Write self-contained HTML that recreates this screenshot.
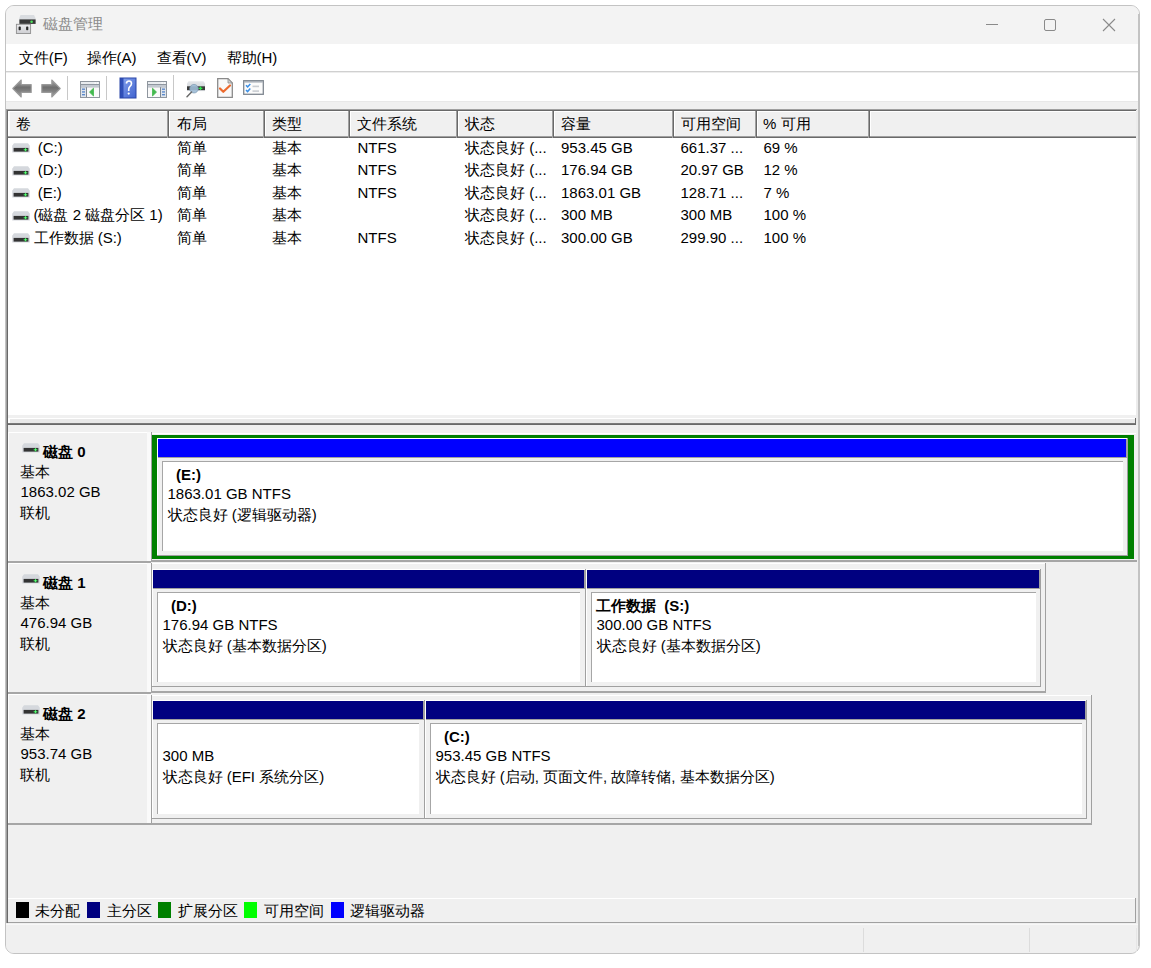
<!DOCTYPE html>
<html><head><meta charset="utf-8">
<style>
*{box-sizing:border-box;margin:0;padding:0}
html,body{width:1151px;height:968px;overflow:hidden;background:#fff;font-family:"Liberation Sans",sans-serif;font-size:15px;color:#000}
.a{position:absolute}
.t{position:absolute;white-space:nowrap;line-height:20px}
.b{font-weight:bold}
svg{position:absolute;overflow:visible}
</style></head><body>
<div class="a" style="left:5px;top:5px;width:1135px;height:949px;border:1px solid #c3c3c3;border-radius:9px;background:#f0f0f0;overflow:hidden">
<div class="a" style="left:0;top:0;width:1133px;height:38px;background:#f3f3f3"></div>
</div>
<div class="a" style="left:1138px;top:14px;width:1px;height:932px;background:#c3c3c3;"></div>
<svg style="left:15px;top:14px" width="22" height="21" viewBox="0 0 22 21">
<defs><linearGradient id="dbox" x1="0" y1="0" x2="0" y2="1"><stop offset="0" stop-color="#ececee"/><stop offset="1" stop-color="#cdced2"/></linearGradient></defs>
<path d="M5.5 1 H19 L20.6 4.5 V10 H4.2 V4.5 Z" fill="#d9dce0"/>
<rect x="4.4" y="5.4" width="16.2" height="4.5" fill="#383838"/>
<circle cx="16.6" cy="7.8" r="1.3" fill="#4ee35f"/>
<rect x="1.4" y="10.3" width="14.2" height="9.2" fill="url(#dbox)" stroke="#8f8f8f" stroke-width="0.9"/>
<rect x="3.6" y="12.6" width="2.2" height="3.6" rx="0.8" fill="#2a2a2a"/>
<rect x="11.1" y="12.6" width="2.2" height="3.6" rx="0.8" fill="#2a2a2a"/>
</svg>
<div class="t" style="left:43px;top:14px;color:#8b8b8b">磁盘管理</div>
<div class="a" style="left:986px;top:24px;width:12px;height:1px;background:#8a8a8a;"></div>
<div class="a" style="left:1044px;top:19px;width:12px;height:12px;background:transparent;border:1px solid #8a8a8a;border-radius:2px"></div>
<svg style="left:1102px;top:18px" width="14" height="14" viewBox="0 0 14 14"><path d="M1 1 L13 13 M13 1 L1 13" stroke="#8a8a8a" stroke-width="1.1"/></svg>
<div class="a" style="left:6px;top:44px;width:1132px;height:27px;background:#fff;"></div>
<div class="a" style="left:6px;top:71px;width:1132px;height:1px;background:#d0d0d0;"></div>
<div class="t" style="left:18.7px;top:48px;">文件(F)</div>
<div class="t" style="left:86.5px;top:48px;">操作(A)</div>
<div class="t" style="left:156.5px;top:48px;">查看(V)</div>
<div class="t" style="left:226.5px;top:48px;">帮助(H)</div>
<div class="a" style="left:6px;top:72px;width:1132px;height:29px;background:#fff;"></div>
<div class="a" style="left:6px;top:72px;width:1132px;height:1px;background:#ededed;"></div>
<div class="a" style="left:6px;top:101px;width:1132px;height:1px;background:#e8e8e8;"></div>
<div class="a" style="left:6px;top:102px;width:1132px;height:7px;background:#f0f0f0;"></div>
<div class="a" style="left:67px;top:76px;width:1px;height:24px;background:#c8c8c8;"></div>
<div class="a" style="left:106px;top:76px;width:1px;height:24px;background:#c8c8c8;"></div>
<div class="a" style="left:173px;top:75px;width:1px;height:25px;background:#c8c8c8;"></div>
<svg style="left:12px;top:79px" width="20" height="19" viewBox="0 0 20 19">
<defs><linearGradient id="ar" x1="0" y1="0" x2="0" y2="1"><stop offset="0" stop-color="#a9a9a9"/><stop offset="0.45" stop-color="#6f6f6f"/><stop offset="1" stop-color="#a0a0a0"/></linearGradient></defs>
<path d="M0.8 9.5 L9.2 1 V5.6 H19.2 V13.4 H9.2 V18 Z" fill="url(#ar)" stroke="#9a9a9a" stroke-width="1.1" stroke-linejoin="round"/></svg>
<svg style="left:41px;top:79px" width="20" height="19" viewBox="0 0 20 19">
<path d="M19.2 9.5 L10.8 1 V5.6 H0.8 V13.4 H10.8 V18 Z" fill="url(#ar)" stroke="#9a9a9a" stroke-width="1.1" stroke-linejoin="round"/></svg>
<svg style="left:80px;top:81px" width="20" height="17" viewBox="0 0 20 17"><rect x="0" y="0" width="20" height="17" fill="#8f969e"/><rect x="1" y="1" width="18" height="2" fill="#e9ecef"/><rect x="1" y="3" width="18" height="0.8" fill="#7f8790"/><rect x="14.5" y="1.4" width="1.4" height="1.3" fill="#fff"/><rect x="17" y="1.4" width="1.4" height="1.3" fill="#fff"/><rect x="1" y="3.8" width="18" height="2.6" fill="#c3c9d1"/><rect x="1" y="6.4" width="5" height="9.6" fill="#dfe5ec"/><rect x="6" y="6.4" width="1" height="9.6" fill="#7f8790"/><rect x="7" y="6.4" width="12" height="9.6" fill="#fafafa"/><rect x="2" y="7.6" width="3" height="1.1" fill="#3b73c4"/><rect x="2" y="10.4" width="3" height="1.1" fill="#3b73c4"/><rect x="2" y="13.2" width="3" height="1.1" fill="#3b73c4"/><path d="M13.5 7.2 V15 L9.5 11.1 Z" fill="#42b94e" stroke="#42b94e" stroke-width="0.8" stroke-linejoin="round"/></svg>
<svg style="left:147px;top:81px" width="20" height="17" viewBox="0 0 20 17"><rect x="0" y="0" width="20" height="17" fill="#8f969e"/><rect x="1" y="1" width="18" height="2" fill="#e9ecef"/><rect x="1" y="3" width="18" height="0.8" fill="#7f8790"/><rect x="14.5" y="1.4" width="1.4" height="1.3" fill="#fff"/><rect x="17" y="1.4" width="1.4" height="1.3" fill="#fff"/><rect x="1" y="3.8" width="18" height="2.6" fill="#c3c9d1"/><rect x="14" y="6.4" width="5" height="9.6" fill="#dfe5ec"/><rect x="13" y="6.4" width="1" height="9.6" fill="#7f8790"/><rect x="1" y="6.4" width="12" height="9.6" fill="#fafafa"/><rect x="15" y="7.6" width="3" height="1.1" fill="#3b73c4"/><rect x="15" y="10.4" width="3" height="1.1" fill="#3b73c4"/><rect x="15" y="13.2" width="3" height="1.1" fill="#3b73c4"/><path d="M5.5 7.2 V15 L9.5 11.1 Z" fill="#42b94e" stroke="#42b94e" stroke-width="0.8" stroke-linejoin="round"/></svg>
<svg style="left:120px;top:78px" width="16" height="20" viewBox="0 0 16 20">
<defs><linearGradient id="hq" x1="0" y1="0" x2="1" y2="1"><stop offset="0" stop-color="#89a6ee"/><stop offset="1" stop-color="#3f62cf"/></linearGradient></defs>
<rect x="0" y="0" width="16" height="20" fill="url(#hq)"/>
<rect x="0" y="0" width="3.5" height="20" fill="#2f4fb8"/>
<rect x="0" y="0" width="16" height="20" fill="none" stroke="#2a46a8" stroke-width="1"/>
<path d="M6.3 5.5 Q6.8 3 9 3 Q11.5 3 11.5 5.6 Q11.5 7.3 9.8 8.6 Q8.7 9.6 8.7 11.5 V13" fill="none" stroke="#fff" stroke-width="1.6"/>
<circle cx="8.7" cy="15.6" r="1.1" fill="#fff"/></svg>
<svg style="left:186px;top:80px" width="21" height="18" viewBox="0 0 21 18">
<defs><linearGradient id="mg" x1="0" y1="0" x2="0" y2="1"><stop offset="0" stop-color="#e6e8eb"/><stop offset="1" stop-color="#c9cdd3"/></linearGradient></defs>
<path d="M2.5 1.2 H17.5 L19 3.5 V11 H1 V3.5 Z" fill="url(#mg)"/>
<rect x="1" y="6.3" width="18" height="4" fill="#3a3a3a"/>
<rect x="1" y="10.3" width="18" height="0.8" fill="#d9dce0"/>
<path d="M12.6 8.3 H16.4 M14.5 6.5 V10.1" stroke="#2ee24a" stroke-width="1.3"/>
<circle cx="8" cy="8.7" r="4.3" fill="#9fbcd6" fill-opacity="0.9" stroke="#7d9ab3" stroke-width="0.7"/>
<path d="M5.6 12 L1 16.8" stroke="#6b6b6b" stroke-width="1.5" stroke-linecap="round"/></svg>
<svg style="left:217px;top:78px" width="16" height="20" viewBox="0 0 16 20">
<path d="M0.7 0.7 H11 L15.3 5 V19.3 H0.7 Z" fill="#f9f9f9" stroke="#8a8a8a" stroke-width="1.3"/>
<path d="M11 0.7 V5 H15.3 Z" fill="#cfcfcf" stroke="#8a8a8a" stroke-width="0.8"/>
<path d="M3 10.5 L6.3 13.8 L13 7.5" fill="none" stroke="#ec6a2e" stroke-width="2.2" stroke-linecap="round" stroke-linejoin="round"/></svg>
<svg style="left:243px;top:80px" width="21" height="15" viewBox="0 0 21 15">
<rect x="0.7" y="0.7" width="19.6" height="13.6" fill="#fbfbfb" stroke="#7f8790" stroke-width="1.3"/>
<rect x="1.3" y="1.3" width="18.4" height="1.2" fill="#9aa2ab"/>
<path d="M3 5.3 L4.6 6.9 L7.3 3.9 M3 10 L4.6 11.6 L7.3 8.6" fill="none" stroke="#3a8fe6" stroke-width="1.5"/>
<rect x="9.5" y="5.6" width="6.5" height="1.6" fill="#c9cdd2"/><rect x="9.5" y="10.3" width="6.5" height="1.6" fill="#c9cdd2"/></svg>
<div class="a" style="left:6px;top:109px;width:1131px;height:1px;background:#a0a0a0;"></div>
<div class="a" style="left:6px;top:110px;width:1130px;height:1px;background:#696969;"></div>
<div class="a" style="left:1136px;top:110px;width:2px;height:814px;background:#ececec;"></div>
<div class="a" style="left:6px;top:109px;width:1px;height:316px;background:#a0a0a0;"></div>
<div class="a" style="left:7px;top:110px;width:1px;height:315px;background:#696969;"></div>
<div class="a" style="left:8px;top:111px;width:1128px;height:304px;background:#fff;"></div>
<div class="a" style="left:8px;top:111px;width:1128px;height:27px;background:#f0f0f0;"></div>
<div class="a" style="left:8px;top:136px;width:1128px;height:1px;background:#a0a0a0;"></div>
<div class="a" style="left:8px;top:137px;width:1128px;height:1px;background:#696969;"></div>
<div class="a" style="left:8px;top:111px;width:1px;height:25px;background:#fff;"></div>
<div class="a" style="left:169px;top:111px;width:1px;height:25px;background:#fff;"></div>
<div class="a" style="left:265px;top:111px;width:1px;height:25px;background:#fff;"></div>
<div class="a" style="left:350px;top:111px;width:1px;height:25px;background:#fff;"></div>
<div class="a" style="left:458px;top:111px;width:1px;height:25px;background:#fff;"></div>
<div class="a" style="left:554px;top:111px;width:1px;height:25px;background:#fff;"></div>
<div class="a" style="left:674px;top:111px;width:1px;height:25px;background:#fff;"></div>
<div class="a" style="left:757px;top:111px;width:1px;height:25px;background:#fff;"></div>
<div class="a" style="left:870px;top:111px;width:1px;height:25px;background:#fff;"></div>
<div class="a" style="left:8px;top:111px;width:1128px;height:1px;background:#fff;"></div>
<div class="a" style="left:9px;top:112px;width:1px;height:24px;background:#fafafa;"></div>
<div class="a" style="left:167px;top:111px;width:1px;height:27px;background:#a0a0a0;"></div>
<div class="a" style="left:168px;top:111px;width:1px;height:27px;background:#696969;"></div>
<div class="a" style="left:263px;top:111px;width:1px;height:27px;background:#a0a0a0;"></div>
<div class="a" style="left:264px;top:111px;width:1px;height:27px;background:#696969;"></div>
<div class="a" style="left:348px;top:111px;width:1px;height:27px;background:#a0a0a0;"></div>
<div class="a" style="left:349px;top:111px;width:1px;height:27px;background:#696969;"></div>
<div class="a" style="left:456px;top:111px;width:1px;height:27px;background:#a0a0a0;"></div>
<div class="a" style="left:457px;top:111px;width:1px;height:27px;background:#696969;"></div>
<div class="a" style="left:552px;top:111px;width:1px;height:27px;background:#a0a0a0;"></div>
<div class="a" style="left:553px;top:111px;width:1px;height:27px;background:#696969;"></div>
<div class="a" style="left:672px;top:111px;width:1px;height:27px;background:#a0a0a0;"></div>
<div class="a" style="left:673px;top:111px;width:1px;height:27px;background:#696969;"></div>
<div class="a" style="left:755px;top:111px;width:1px;height:27px;background:#a0a0a0;"></div>
<div class="a" style="left:756px;top:111px;width:1px;height:27px;background:#696969;"></div>
<div class="a" style="left:868px;top:111px;width:1px;height:27px;background:#a0a0a0;"></div>
<div class="a" style="left:869px;top:111px;width:1px;height:27px;background:#696969;"></div>
<div class="t" style="left:15.5px;top:114px;">卷</div>
<div class="t" style="left:177px;top:114px;">布局</div>
<div class="t" style="left:271.5px;top:114px;">类型</div>
<div class="t" style="left:357px;top:114px;">文件系统</div>
<div class="t" style="left:465px;top:114px;">状态</div>
<div class="t" style="left:561px;top:114px;">容量</div>
<div class="t" style="left:681px;top:114px;">可用空间</div>
<div class="t" style="left:763px;top:114px;">% 可用</div>
<svg style="left:12px;top:143.2px" width="18" height="10" viewBox="0 0 18 10">
<path d="M2 0.2 H16 L17.8 2.8 V9.6 H0.2 V2.8 Z" fill="#d5d8dd"/>
<rect x="1.6" y="4.9" width="14.8" height="3.7" fill="#333"/>
<path d="M11.6 6.75 H15.4 M13.5 5.0 V8.5" stroke="#3be257" stroke-width="1.1"/>
<circle cx="13.5" cy="6.75" r="0.9" fill="#5dff78"/></svg>
<div class="t" style="left:33.5px;top:137.6px;">&nbsp;(C:)</div>
<div class="t" style="left:177px;top:137.6px;">简单</div>
<div class="t" style="left:272px;top:137.6px;">基本</div>
<div class="t" style="left:357.5px;top:137.6px;">NTFS</div>
<div class="t" style="left:465px;top:137.6px;">状态良好 (...</div>
<div class="t" style="left:561px;top:137.6px;">953.45 GB</div>
<div class="t" style="left:680.5px;top:137.6px;">661.37 ...</div>
<div class="t" style="left:763.5px;top:137.6px;">69 %</div>
<svg style="left:12px;top:165.7px" width="18" height="10" viewBox="0 0 18 10">
<path d="M2 0.2 H16 L17.8 2.8 V9.6 H0.2 V2.8 Z" fill="#d5d8dd"/>
<rect x="1.6" y="4.9" width="14.8" height="3.7" fill="#333"/>
<path d="M11.6 6.75 H15.4 M13.5 5.0 V8.5" stroke="#3be257" stroke-width="1.1"/>
<circle cx="13.5" cy="6.75" r="0.9" fill="#5dff78"/></svg>
<div class="t" style="left:33.5px;top:160.1px;">&nbsp;(D:)</div>
<div class="t" style="left:177px;top:160.1px;">简单</div>
<div class="t" style="left:272px;top:160.1px;">基本</div>
<div class="t" style="left:357.5px;top:160.1px;">NTFS</div>
<div class="t" style="left:465px;top:160.1px;">状态良好 (...</div>
<div class="t" style="left:561px;top:160.1px;">176.94 GB</div>
<div class="t" style="left:680.5px;top:160.1px;">20.97 GB</div>
<div class="t" style="left:763.5px;top:160.1px;">12 %</div>
<svg style="left:12px;top:188.2px" width="18" height="10" viewBox="0 0 18 10">
<path d="M2 0.2 H16 L17.8 2.8 V9.6 H0.2 V2.8 Z" fill="#d5d8dd"/>
<rect x="1.6" y="4.9" width="14.8" height="3.7" fill="#333"/>
<path d="M11.6 6.75 H15.4 M13.5 5.0 V8.5" stroke="#3be257" stroke-width="1.1"/>
<circle cx="13.5" cy="6.75" r="0.9" fill="#5dff78"/></svg>
<div class="t" style="left:33.5px;top:182.6px;">&nbsp;(E:)</div>
<div class="t" style="left:177px;top:182.6px;">简单</div>
<div class="t" style="left:272px;top:182.6px;">基本</div>
<div class="t" style="left:357.5px;top:182.6px;">NTFS</div>
<div class="t" style="left:465px;top:182.6px;">状态良好 (...</div>
<div class="t" style="left:561px;top:182.6px;">1863.01 GB</div>
<div class="t" style="left:680.5px;top:182.6px;">128.71 ...</div>
<div class="t" style="left:763.5px;top:182.6px;">7 %</div>
<svg style="left:12px;top:210.7px" width="18" height="10" viewBox="0 0 18 10">
<path d="M2 0.2 H16 L17.8 2.8 V9.6 H0.2 V2.8 Z" fill="#d5d8dd"/>
<rect x="1.6" y="4.9" width="14.8" height="3.7" fill="#333"/>
<path d="M11.6 6.75 H15.4 M13.5 5.0 V8.5" stroke="#3be257" stroke-width="1.1"/>
<circle cx="13.5" cy="6.75" r="0.9" fill="#5dff78"/></svg>
<div class="t" style="left:33.5px;top:205.1px;">(磁盘 2 磁盘分区 1)</div>
<div class="t" style="left:177px;top:205.1px;">简单</div>
<div class="t" style="left:272px;top:205.1px;">基本</div>
<div class="t" style="left:357.5px;top:205.1px;"></div>
<div class="t" style="left:465px;top:205.1px;">状态良好 (...</div>
<div class="t" style="left:561px;top:205.1px;">300 MB</div>
<div class="t" style="left:680.5px;top:205.1px;">300 MB</div>
<div class="t" style="left:763.5px;top:205.1px;">100 %</div>
<svg style="left:12px;top:233.2px" width="18" height="10" viewBox="0 0 18 10">
<path d="M2 0.2 H16 L17.8 2.8 V9.6 H0.2 V2.8 Z" fill="#d5d8dd"/>
<rect x="1.6" y="4.9" width="14.8" height="3.7" fill="#333"/>
<path d="M11.6 6.75 H15.4 M13.5 5.0 V8.5" stroke="#3be257" stroke-width="1.1"/>
<circle cx="13.5" cy="6.75" r="0.9" fill="#5dff78"/></svg>
<div class="t" style="left:33.5px;top:227.6px;">工作数据 (S:)</div>
<div class="t" style="left:177px;top:227.6px;">简单</div>
<div class="t" style="left:272px;top:227.6px;">基本</div>
<div class="t" style="left:357.5px;top:227.6px;">NTFS</div>
<div class="t" style="left:465px;top:227.6px;">状态良好 (...</div>
<div class="t" style="left:561px;top:227.6px;">300.00 GB</div>
<div class="t" style="left:680.5px;top:227.6px;">299.90 ...</div>
<div class="t" style="left:763.5px;top:227.6px;">100 %</div>
<div class="a" style="left:8px;top:415px;width:1128px;height:3px;background:#f0f0f0;"></div>
<div class="a" style="left:8px;top:418px;width:1127px;height:1px;background:#fff;"></div>
<div class="a" style="left:8px;top:419px;width:1127px;height:4px;background:#e9e9e9;"></div>
<div class="a" style="left:8px;top:418px;width:2px;height:5px;background:#fff;"></div>
<div class="a" style="left:8px;top:423px;width:1128px;height:1px;background:#7a7a7a;"></div>
<div class="a" style="left:8px;top:424px;width:1128px;height:1px;background:#696969;"></div>
<div class="a" style="left:1135px;top:418px;width:1px;height:7px;background:#696969;"></div>
<div class="a" style="left:6px;top:425px;width:1px;height:498px;background:#a0a0a0;"></div>
<div class="a" style="left:7px;top:425px;width:1px;height:498px;background:#696969;"></div>
<div class="a" style="left:8px;top:425px;width:1130px;height:473px;background:#f0f0f0;"></div>
<div class="a" style="left:8px;top:432px;width:143px;height:1px;background:#fff;"></div>
<div class="a" style="left:8px;top:432px;width:1px;height:129px;background:#fff;"></div>
<div class="a" style="left:147px;top:432px;width:4px;height:129px;background:#fafafa;"></div>
<div class="a" style="left:8px;top:561px;width:143px;height:2px;background:#a6a6a6;"></div>
<svg style="left:22px;top:443px" width="18" height="10" viewBox="0 0 18 10">
<path d="M2 0.2 H16 L17.8 2.8 V9.6 H0.2 V2.8 Z" fill="#d5d8dd"/>
<rect x="1.6" y="4.9" width="14.8" height="3.7" fill="#333"/>
<path d="M11.6 6.75 H15.4 M13.5 5.0 V8.5" stroke="#3be257" stroke-width="1.1"/>
<circle cx="13.5" cy="6.75" r="0.9" fill="#5dff78"/></svg>
<div class="t" style="left:43px;top:442px;font-weight:bold">磁盘 0</div>
<div class="t" style="left:19.7px;top:462px;">基本</div>
<div class="t" style="left:20.5px;top:482px;">1863.02 GB</div>
<div class="t" style="left:19.7px;top:503px;">联机</div>
<div class="a" style="left:8px;top:563px;width:143px;height:1px;background:#fff;"></div>
<div class="a" style="left:8px;top:563px;width:1px;height:129px;background:#fff;"></div>
<div class="a" style="left:147px;top:563px;width:4px;height:129px;background:#fafafa;"></div>
<div class="a" style="left:8px;top:692px;width:143px;height:2px;background:#a6a6a6;"></div>
<svg style="left:22px;top:574px" width="18" height="10" viewBox="0 0 18 10">
<path d="M2 0.2 H16 L17.8 2.8 V9.6 H0.2 V2.8 Z" fill="#d5d8dd"/>
<rect x="1.6" y="4.9" width="14.8" height="3.7" fill="#333"/>
<path d="M11.6 6.75 H15.4 M13.5 5.0 V8.5" stroke="#3be257" stroke-width="1.1"/>
<circle cx="13.5" cy="6.75" r="0.9" fill="#5dff78"/></svg>
<div class="t" style="left:43px;top:573px;font-weight:bold">磁盘 1</div>
<div class="t" style="left:19.7px;top:593px;">基本</div>
<div class="t" style="left:20.5px;top:613px;">476.94 GB</div>
<div class="t" style="left:19.7px;top:634px;">联机</div>
<div class="a" style="left:8px;top:694px;width:143px;height:1px;background:#fff;"></div>
<div class="a" style="left:8px;top:694px;width:1px;height:129px;background:#fff;"></div>
<div class="a" style="left:147px;top:694px;width:4px;height:129px;background:#fafafa;"></div>
<div class="a" style="left:8px;top:823px;width:143px;height:2px;background:#a6a6a6;"></div>
<svg style="left:22px;top:705px" width="18" height="10" viewBox="0 0 18 10">
<path d="M2 0.2 H16 L17.8 2.8 V9.6 H0.2 V2.8 Z" fill="#d5d8dd"/>
<rect x="1.6" y="4.9" width="14.8" height="3.7" fill="#333"/>
<path d="M11.6 6.75 H15.4 M13.5 5.0 V8.5" stroke="#3be257" stroke-width="1.1"/>
<circle cx="13.5" cy="6.75" r="0.9" fill="#5dff78"/></svg>
<div class="t" style="left:43px;top:704px;font-weight:bold">磁盘 2</div>
<div class="t" style="left:19.7px;top:724px;">基本</div>
<div class="t" style="left:20.5px;top:744px;">953.74 GB</div>
<div class="t" style="left:19.7px;top:765px;">联机</div>
<div class="a" style="left:151px;top:433px;width:985px;height:1px;background:#fff;"></div>
<div class="a" style="left:151px;top:432px;width:1px;height:129px;background:#a0a0a0;"></div>
<div class="a" style="left:151px;top:560px;width:986px;height:2px;background:#a6a6a6;"></div>
<div class="a" style="left:152px;top:435px;width:982px;height:124px;background:#008000;"></div>
<div class="a" style="left:157px;top:438px;width:971px;height:118px;background:#f0f0f0;"></div>
<div class="a" style="left:157px;top:438px;width:970px;height:1px;background:#fff;"></div>
<div class="a" style="left:157px;top:438px;width:1px;height:117px;background:#fff;"></div>
<div class="a" style="left:158px;top:439px;width:968px;height:18px;background:#0000ff;"></div>
<div class="a" style="left:158px;top:457px;width:969px;height:1px;background:#a0a0a0;"></div>
<div class="a" style="left:1126px;top:439px;width:1px;height:19px;background:#a0a0a0;"></div>
<div class="a" style="left:1127px;top:438px;width:1px;height:118px;background:#a0a0a0;"></div>
<div class="a" style="left:157px;top:555px;width:971px;height:1px;background:#a0a0a0;"></div>
<div class="a" style="left:162px;top:461px;width:961px;height:1px;background:#a6a6a6;"></div>
<div class="a" style="left:162px;top:461px;width:1px;height:90px;background:#a6a6a6;"></div>
<div class="a" style="left:163px;top:462px;width:960px;height:89px;background:#fff;"></div>
<div class="t" style="left:176px;top:465.2px;font-weight:bold">(E:)</div>
<div class="t" style="left:167.5px;top:483.7px;">1863.01 GB NTFS</div>
<div class="t" style="left:167.5px;top:504.7px;">状态良好 (逻辑驱动器)</div>
<div class="a" style="left:151px;top:563px;width:894px;height:1px;background:#fff;"></div>
<div class="a" style="left:151px;top:563px;width:1px;height:128px;background:#a0a0a0;"></div>
<div class="a" style="left:1045px;top:563px;width:1px;height:129px;background:#a0a0a0;"></div>
<div class="a" style="left:151px;top:691px;width:895px;height:2px;background:#a6a6a6;"></div>
<div class="a" style="left:152px;top:569px;width:433px;height:1px;background:#fff;"></div>
<div class="a" style="left:152px;top:569px;width:1px;height:117px;background:#fff;"></div>
<div class="a" style="left:153px;top:570px;width:431px;height:18px;background:#000080;"></div>
<div class="a" style="left:153px;top:588px;width:432px;height:1px;background:#a0a0a0;"></div>
<div class="a" style="left:584px;top:570px;width:1px;height:19px;background:#a0a0a0;"></div>
<div class="a" style="left:585px;top:569px;width:1px;height:118px;background:#a0a0a0;"></div>
<div class="a" style="left:152px;top:686px;width:434px;height:1px;background:#a0a0a0;"></div>
<div class="a" style="left:157px;top:592px;width:423px;height:1px;background:#a6a6a6;"></div>
<div class="a" style="left:157px;top:592px;width:1px;height:90px;background:#a6a6a6;"></div>
<div class="a" style="left:158px;top:593px;width:422px;height:89px;background:#fff;"></div>
<div class="t" style="left:171px;top:596.2px;font-weight:bold">(D:)</div>
<div class="t" style="left:162.5px;top:614.7px;">176.94 GB NTFS</div>
<div class="t" style="left:162.5px;top:635.7px;">状态良好 (基本数据分区)</div>
<div class="a" style="left:586px;top:569px;width:454px;height:1px;background:#fff;"></div>
<div class="a" style="left:586px;top:569px;width:1px;height:117px;background:#fff;"></div>
<div class="a" style="left:587px;top:570px;width:452px;height:18px;background:#000080;"></div>
<div class="a" style="left:587px;top:588px;width:453px;height:1px;background:#a0a0a0;"></div>
<div class="a" style="left:1039px;top:570px;width:1px;height:19px;background:#a0a0a0;"></div>
<div class="a" style="left:1040px;top:569px;width:1px;height:118px;background:#a0a0a0;"></div>
<div class="a" style="left:586px;top:686px;width:455px;height:1px;background:#a0a0a0;"></div>
<div class="a" style="left:591px;top:592px;width:445px;height:1px;background:#a6a6a6;"></div>
<div class="a" style="left:591px;top:592px;width:1px;height:90px;background:#a6a6a6;"></div>
<div class="a" style="left:592px;top:593px;width:444px;height:89px;background:#fff;"></div>
<div class="t" style="left:596px;top:596.2px;font-weight:bold">工作数据&nbsp;&nbsp;(S:)</div>
<div class="t" style="left:596.5px;top:614.7px;">300.00 GB NTFS</div>
<div class="t" style="left:596.5px;top:635.7px;">状态良好 (基本数据分区)</div>
<div class="a" style="left:151px;top:695px;width:940px;height:1px;background:#fff;"></div>
<div class="a" style="left:151px;top:695px;width:1px;height:128px;background:#a0a0a0;"></div>
<div class="a" style="left:1091px;top:695px;width:1px;height:129px;background:#a0a0a0;"></div>
<div class="a" style="left:151px;top:823px;width:941px;height:2px;background:#a6a6a6;"></div>
<div class="a" style="left:152px;top:700px;width:272px;height:1px;background:#fff;"></div>
<div class="a" style="left:152px;top:700px;width:1px;height:118px;background:#fff;"></div>
<div class="a" style="left:153px;top:701px;width:270px;height:18px;background:#000080;"></div>
<div class="a" style="left:153px;top:719px;width:271px;height:1px;background:#a0a0a0;"></div>
<div class="a" style="left:423px;top:701px;width:1px;height:19px;background:#a0a0a0;"></div>
<div class="a" style="left:424px;top:700px;width:1px;height:119px;background:#a0a0a0;"></div>
<div class="a" style="left:152px;top:818px;width:273px;height:1px;background:#a0a0a0;"></div>
<div class="a" style="left:157px;top:723px;width:262px;height:1px;background:#a6a6a6;"></div>
<div class="a" style="left:157px;top:723px;width:1px;height:91px;background:#a6a6a6;"></div>
<div class="a" style="left:158px;top:724px;width:261px;height:90px;background:#fff;"></div>
<div class="t" style="left:171px;top:727.2px;font-weight:bold"></div>
<div class="t" style="left:162.5px;top:745.7px;">300 MB</div>
<div class="t" style="left:162.5px;top:766.7px;">状态良好 (EFI 系统分区)</div>
<div class="a" style="left:425px;top:700px;width:661px;height:1px;background:#fff;"></div>
<div class="a" style="left:425px;top:700px;width:1px;height:118px;background:#fff;"></div>
<div class="a" style="left:426px;top:701px;width:659px;height:18px;background:#000080;"></div>
<div class="a" style="left:426px;top:719px;width:660px;height:1px;background:#a0a0a0;"></div>
<div class="a" style="left:1085px;top:701px;width:1px;height:19px;background:#a0a0a0;"></div>
<div class="a" style="left:1086px;top:700px;width:1px;height:119px;background:#a0a0a0;"></div>
<div class="a" style="left:425px;top:818px;width:662px;height:1px;background:#a0a0a0;"></div>
<div class="a" style="left:430px;top:723px;width:652px;height:1px;background:#a6a6a6;"></div>
<div class="a" style="left:430px;top:723px;width:1px;height:91px;background:#a6a6a6;"></div>
<div class="a" style="left:431px;top:724px;width:651px;height:90px;background:#fff;"></div>
<div class="t" style="left:444px;top:727.2px;font-weight:bold">(C:)</div>
<div class="t" style="left:435.5px;top:745.7px;">953.45 GB NTFS</div>
<div class="t" style="left:435.5px;top:766.7px;">状态良好 (启动, 页面文件, 故障转储, 基本数据分区)</div>
<div class="a" style="left:8px;top:898px;width:1128px;height:1px;background:#fff;"></div>
<div class="a" style="left:8px;top:899px;width:1127px;height:23px;background:#f0f0f0;"></div>
<div class="a" style="left:8px;top:922px;width:1128px;height:1px;background:#a0a0a0;"></div>
<div class="a" style="left:1135px;top:898px;width:1px;height:25px;background:#a0a0a0;"></div>
<div class="a" style="left:16px;top:902px;width:13px;height:16px;background:#000;"></div>
<div class="t" style="left:34.5px;top:901px;">未分配</div>
<div class="a" style="left:87px;top:902px;width:13px;height:16px;background:#000080;"></div>
<div class="t" style="left:106.5px;top:901px;">主分区</div>
<div class="a" style="left:158px;top:902px;width:13px;height:16px;background:#008000;"></div>
<div class="t" style="left:177.5px;top:901px;">扩展分区</div>
<div class="a" style="left:244px;top:902px;width:13px;height:16px;background:#00ff00;"></div>
<div class="t" style="left:263.5px;top:901px;">可用空间</div>
<div class="a" style="left:331px;top:902px;width:13px;height:16px;background:#0000ff;"></div>
<div class="t" style="left:349.5px;top:901px;">逻辑驱动器</div>
<div class="a" style="left:6px;top:923px;width:1132px;height:30px;background:#f0f0f0;border-bottom-left-radius:8px;border-bottom-right-radius:8px"></div>
<div class="a" style="left:6px;top:924px;width:1132px;height:1px;background:#f8f8f8;"></div>
<div class="a" style="left:863px;top:928px;width:1px;height:24px;background:#dcdcdc;"></div>
<div class="a" style="left:1029px;top:928px;width:1px;height:24px;background:#dcdcdc;"></div>
<div class="a" style="left:1136px;top:928px;width:1px;height:24px;background:#e6e6e6;"></div>
</body></html>
